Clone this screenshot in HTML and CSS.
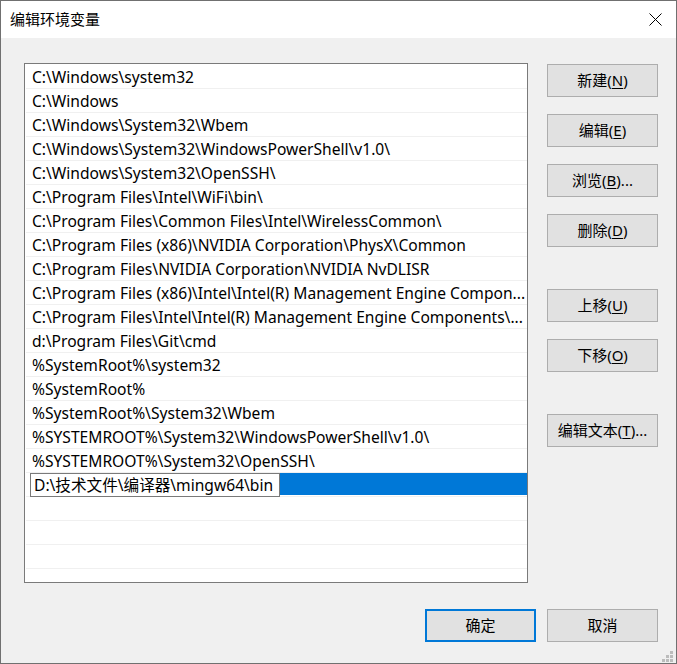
FILE: index.html
```html
<!DOCTYPE html>
<html lang="zh-CN">
<head>
    <meta charset="UTF-8">
    <meta name="viewport" content="width=device-width, initial-scale=1.0">
    <title>编辑环境变量</title>
    <link rel="stylesheet" href="styles.css">
</head>
<body>
    <div class="window">
        <div class="titlebar">
            <div class="title">编辑环境变量</div>
            <svg class="close" width="13" height="13" viewBox="0 0 13 13">
                <path d="M0.5 0.5 L12.5 12.5 M12.5 0.5 L0.5 12.5" stroke="#000" stroke-width="1" fill="none"/>
            </svg>
        </div>

        <div class="content">
            <div class="main">
                <ul class="path-list">
                    <li>C:\Windows\system32</li>
                    <li>C:\Windows</li>
                    <li>C:\Windows\System32\Wbem</li>
                    <li>C:\Windows\System32\WindowsPowerShell\v1.0\</li>
                    <li>C:\Windows\System32\OpenSSH\</li>
                    <li>C:\Program Files\Intel\WiFi\bin\</li>
                    <li>C:\Program Files\Common Files\Intel\WirelessCommon\</li>
                    <li>C:\Program Files (x86)\NVIDIA Corporation\PhysX\Common</li>
                    <li>C:\Program Files\NVIDIA Corporation\NVIDIA NvDLISR</li>
                    <li>C:\Program Files (x86)\Intel\Intel(R) Management Engine Compon...</li>
                    <li>C:\Program Files\Intel\Intel(R) Management Engine Components\...</li>
                    <li>d:\Program Files\Git\cmd</li>
                    <li>%SystemRoot%\system32</li>
                    <li>%SystemRoot%</li>
                    <li>%SystemRoot%\System32\Wbem</li>
                    <li>%SYSTEMROOT%\System32\WindowsPowerShell\v1.0\</li>
                    <li>%SYSTEMROOT%\System32\OpenSSH\</li>
                    <li class="selected">
                        <span class="editor">D:\技术文件\编译器\mingw64\bin</span>
                        <span class="fill"></span>
                    </li>
                    <li></li>
                    <li></li>
                    <li></li>
                    <li></li>
                </ul>

                <div class="actions">
                    <button class="btn">新建(<u>N</u>)</button>
                    <button class="btn">编辑(<u>E</u>)</button>
                    <button class="btn">浏览(<u>B</u>)...</button>
                    <button class="btn">删除(<u>D</u>)</button>
                    <button class="btn group-start">上移(<u>U</u>)</button>
                    <button class="btn">下移(<u>O</u>)</button>
                    <button class="btn group-start">编辑文本(<u>T</u>)...</button>
                </div>
            </div>

            <div class="footer">
                <button class="btn default">确定</button>
                <button class="btn">取消</button>
            </div>
        </div>

        <!-- size grip -->
        <svg class="grip" width="11" height="11" viewBox="0 0 11 11">
            <rect x="8" y="0" width="3" height="3" fill="#bcbcbc"/>
            <rect x="4" y="4" width="3" height="3" fill="#bcbcbc"/>
            <rect x="8" y="4" width="3" height="3" fill="#bcbcbc"/>
            <rect x="0" y="8" width="3" height="3" fill="#bcbcbc"/>
            <rect x="4" y="8" width="3" height="3" fill="#bcbcbc"/>
            <rect x="8" y="8" width="3" height="3" fill="#bcbcbc"/>
        </svg>
    </div>
</body>
</html>
```

FILE: styles.css
```css
* {
    margin: 0;
    padding: 0;
    box-sizing: border-box;
}

body {
    font-family: "Noto Sans", "Noto Sans CJK SC", sans-serif;
    font-size: 15px;
    color: #000;
    background: #f0f0f0;
    overflow: hidden;
}

.window {
    position: relative;
    width: 677px;
    height: 664px;
    border: 1px solid #707070;
    background: #f0f0f0;
    display: flex;
    flex-direction: column;
}

.titlebar {
    height: 37px;
    background: #fff;
    display: flex;
    justify-content: space-between;
    align-items: flex-start;
    padding-left: 9px;
    padding-right: 14px;
}

.title {
    font-size: 15px;
    line-height: 20px;
    margin-top: 8px;
}

.close {
    display: block;
    margin-top: 12px;
}

.content {
    flex: 1;
    padding: 25px 18px 0 23px;
}

.main {
    display: flex;
    gap: 19px;
}

.path-list {
    list-style: none;
    width: 504px;
    height: 520px;
    border: 1px solid #7a7a7a;
    background: #fff;
    padding: 1px 0 0 1px;
    overflow: hidden;
    font-size: 15.6px;
}

.path-list li {
    height: 24px;
    line-height: 24px;
    padding-left: 6px;
    border-bottom: 1px solid #f0f0f0;
    white-space: nowrap;
    overflow: hidden;
}

.path-list li.selected {
    display: flex;
    align-items: flex-start;
    padding-left: 4px;
    overflow: visible;
}

.editor {
    width: 250px;
    height: 24px;
    line-height: 22px;
    border: 1px solid #7a7a7a;
    background: #fff;
    padding-left: 3px;
    flex-shrink: 0;
}

.fill {
    flex: 1;
    height: 22px;
    background: #0078d7;
}

.actions {
    width: 111px;
    display: flex;
    flex-direction: column;
    gap: 17px;
    padding-top: 1px;
}

.btn {
    width: 111px;
    height: 33px;
    padding-bottom: 3px;
    font-family: inherit;
    font-size: 15px;
    color: #000;
    background: #e1e1e1;
    border: 1px solid #adadad;
    text-align: center;
}

.btn u {
    text-underline-offset: 2px;
}

.actions .group-start {
    margin-top: 25px;
}

.footer {
    display: flex;
    justify-content: flex-end;
    gap: 11px;
    margin-top: 26px;
}

.btn.default {
    border: 2px solid #0078d7;
}

.grip {
    position: absolute;
    right: 3px;
    bottom: 1px;
}
```
